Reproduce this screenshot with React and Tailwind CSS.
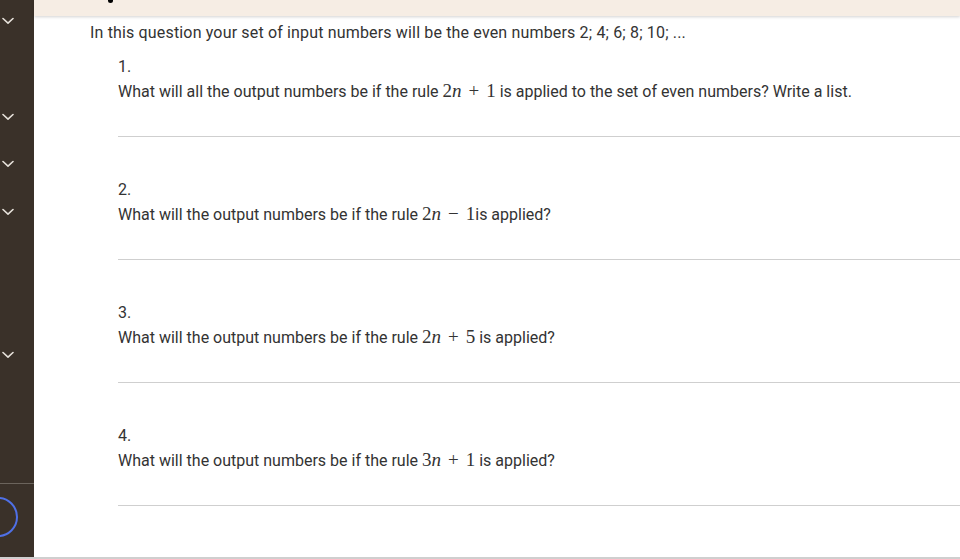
import React from "react";

const Chevron = ({ className = "" }) => (
  <svg width="12" height="8" viewBox="0 0 12 8" className={className}>
    <path d="M1 1.5 L6 6.2 L11 1.5" fill="none" stroke="#e6e1da" strokeWidth="1.6" strokeLinecap="round" strokeLinejoin="round" />
  </svg>
);

const M = ({ a, op, b }) => (
  <span className="text-[19px] tracking-normal" style={{ fontFamily: '"Liberation Serif", "DejaVu Serif", serif' }}>
    {a}<span className="italic">n</span>
    <span className="inline-block mx-[7px]">{op}</span>
    {b}
  </span>
);

const Question = ({ num, children }) => (
  <div className="ml-[28px] h-[123px] flex flex-col tracking-normal">
    <div className="h-[24px] leading-[24px]">{num}.</div>
    <div className="h-[24px] leading-[24px]">{children}</div>
    <div className="mt-[33px] border-b border-[#cfcfcf]"></div>
  </div>
);

export default function App() {
  return (
    <div
      className="w-[960px] h-[559px] overflow-hidden flex bg-white relative"
      style={{ fontFamily: 'Roboto, "Liberation Sans", sans-serif' }}
    >
      <div className="w-[34px] h-[557px] bg-[#3a3129] relative flex flex-col items-start">
        <div className="absolute left-[2px] top-[17px]"><Chevron /></div>
        <div className="absolute left-[2px] top-[113px]"><Chevron /></div>
        <div className="absolute left-[2px] top-[160px]"><Chevron /></div>
        <div className="absolute left-[2px] top-[208px]"><Chevron /></div>
        <div className="absolute left-[2px] top-[351px]"><Chevron /></div>
        <div className="absolute left-0 top-[483px] w-full h-px bg-[#6b645c]"></div>
        <div className="absolute left-[-22px] top-[497px] w-[40px] h-[40px] rounded-full border-2 border-[#4f70e6]"></div>
      </div>
      <div className="flex-1 flex flex-col text-[#333333] text-[16px] tracking-[0.16px]">
        <div className="h-[16px] bg-[#f6ede4] shadow-[0_1px_3px_rgba(0,0,0,0.18)] relative z-10">
          <div className="absolute left-[74px] top-[-3px] w-[5px] h-[6px] rounded-full bg-black"></div>
        </div>
        <div className="pl-[56px] pt-[7px]">
          <div className="h-[20px] leading-[20px]">
            In this question your set of input numbers will be the even numbers 2; 4; 6; 8; 10; ...
          </div>
          <div className="mt-[12px]">
            <Question num="1">
              What will all the output numbers be if the rule <M a="2" op="+" b="1" /> is applied to the set of even numbers? Write a list.
            </Question>
            <Question num="2">
              What will the output numbers be if the rule <M a="2" op="−" b="1" />is applied?
            </Question>
            <Question num="3">
              What will the output numbers be if the rule <M a="2" op="+" b="5" /> is applied?
            </Question>
            <Question num="4">
              What will the output numbers be if the rule <M a="3" op="+" b="1" /> is applied?
            </Question>
          </div>
        </div>
      </div>
      <div className="absolute left-0 bottom-0 w-full h-[2px] bg-[#cfcfcf]"></div>
    </div>
  );
}
